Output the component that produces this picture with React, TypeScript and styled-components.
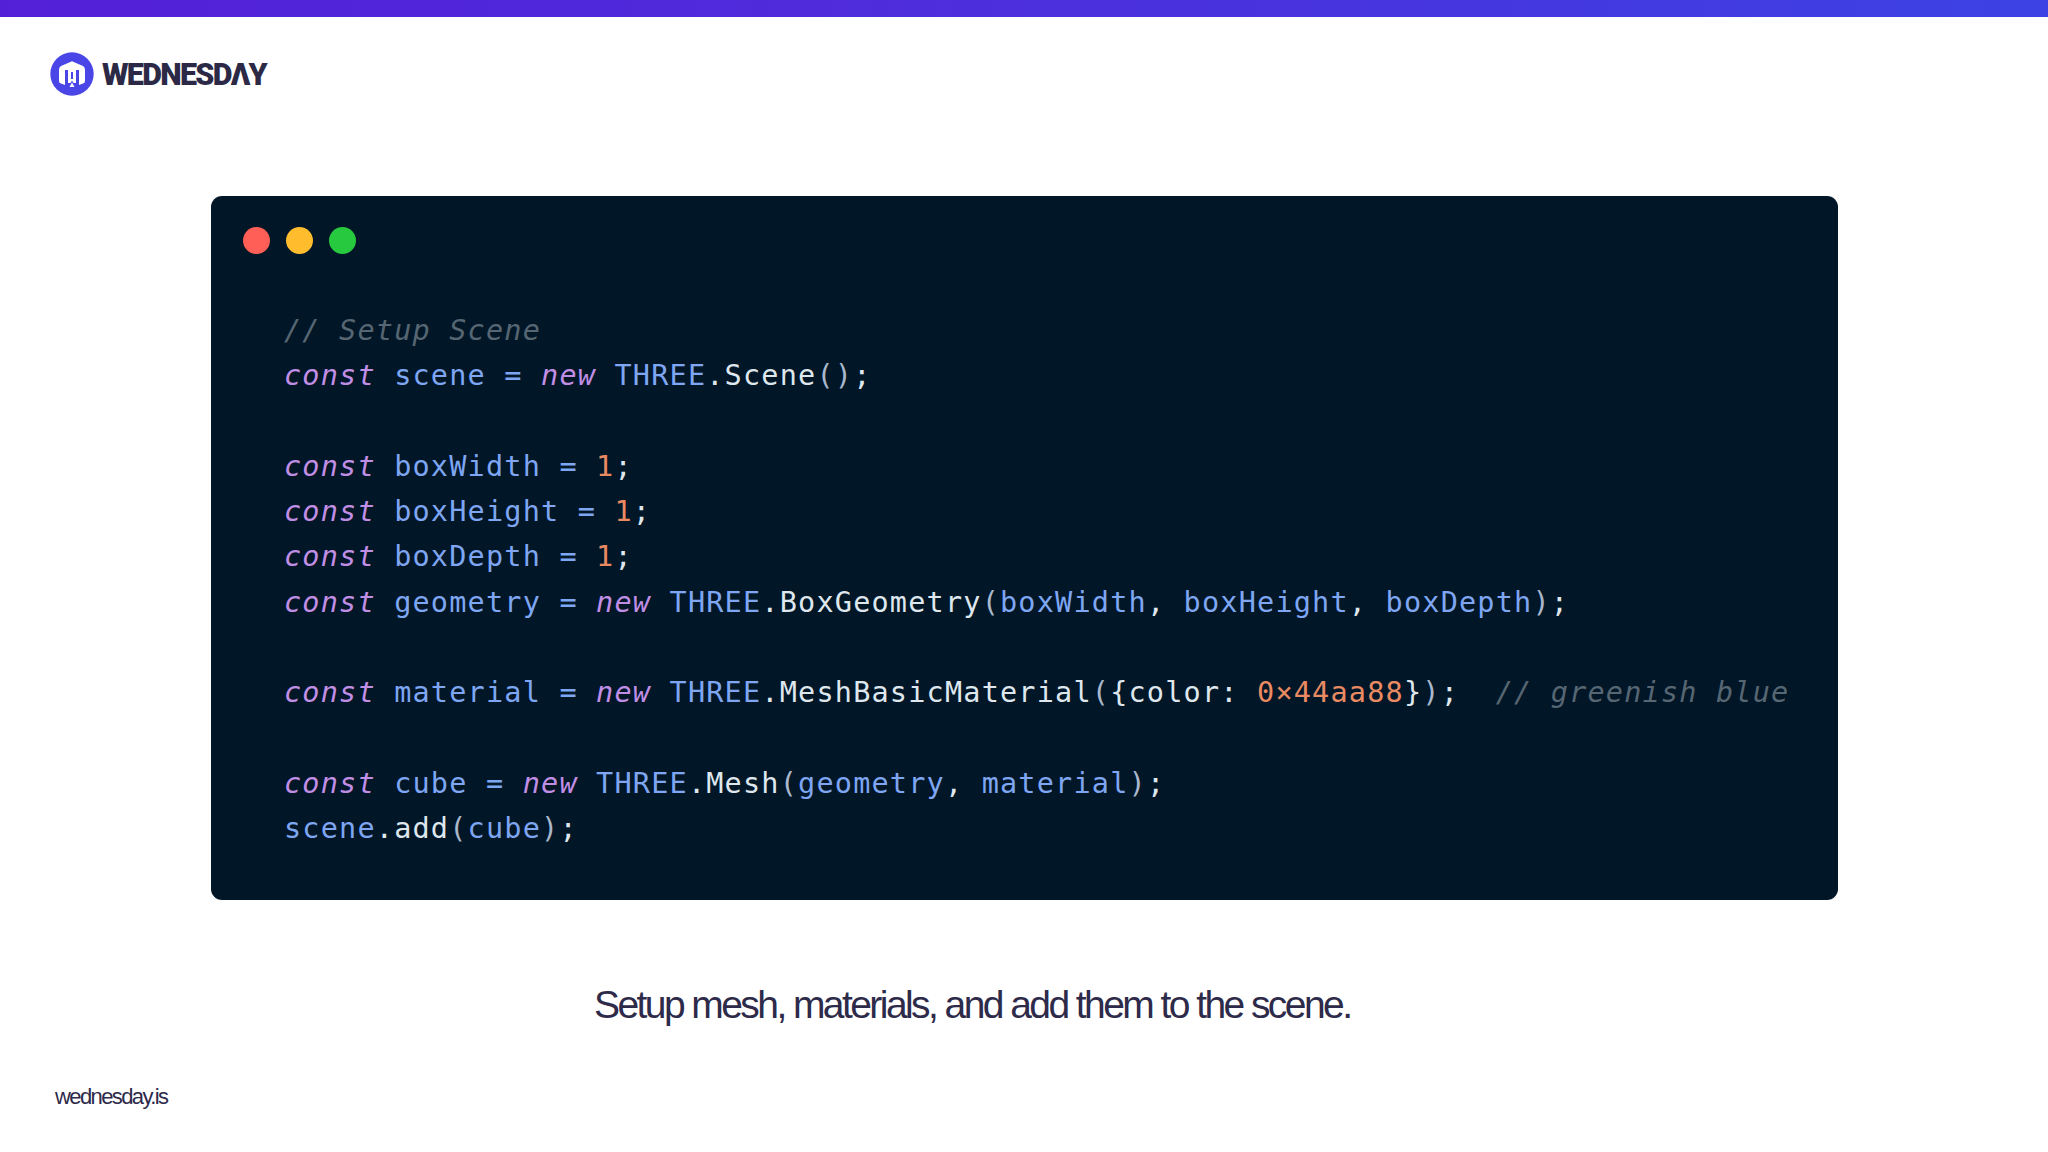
import React from "react";
import styled, { createGlobalStyle } from "styled-components";

const Global = createGlobalStyle`
  html, body { margin: 0; padding: 0; background: #fff; }
  body { width: 2048px; height: 1152px; overflow: hidden; }
`;

const Slide = styled.div`
  width: 2048px;
  height: 1152px;
  display: flex;
  flex-direction: column;
  background: #fff;
  color: #2d2a4a;
  font-family: "Liberation Sans", Arial, sans-serif;
`;

const TopBar = styled.div`
  height: 17px;
  flex: none;
  background: linear-gradient(90deg, #5320d8 0%, #4f2bdc 40%, #4636e0 70%, #3c42e4 100%);
`;

const Header = styled.header`
  height: 179px;
  flex: none;
  box-sizing: border-box;
  padding: 35px 0 0 50px;
  display: flex;
  align-items: flex-start;
  gap: 8px;
`;

const LogoText = styled.span`
  font-family: Roboto, "Liberation Sans", sans-serif;
  font-weight: 900;
  font-size: 30.5px;
  line-height: 45px;
  letter-spacing: -1.7px;
  color: #2b2945;
`;

const CodeCard = styled.section`
  width: 1627px;
  height: 704px;
  margin-left: 210.5px;
  flex: none;
  box-sizing: border-box;
  background: #011627;
  border-radius: 11px;
  padding: 31px 0 0 32px;
`;

const Lights = styled.div`
  display: flex;
  gap: 16px;
`;

const Light = styled.span<{ $color: string }>`
  width: 27px;
  height: 27px;
  border-radius: 50%;
  background: ${(p) => p.$color};
`;

const Code = styled.pre`
  margin: 54px 0 0 41.5px;
  font-family: "DejaVu Sans Mono", "Liberation Mono", monospace;
  font-size: 28.5px;
  letter-spacing: 1.2px;
  line-height: 45.3px;
  color: #dfe7ee;
`;

const Kw = styled.i`
  color: #c18ee6;
`;
const V = styled.span`
  color: #7ea6f2;
`;
const Num = styled.span`
  color: #ea8a62;
`;
const Cm = styled.i`
  color: #566672;
`;
const P = styled.span`
  color: #a9b8cc;
`;

const Caption = styled.p`
  margin: 80px 0 0 594px;
  font-size: 39px;
  line-height: 50px;
  letter-spacing: -2.57px;
  color: #2d2a4a;
  white-space: nowrap;
`;

const Footer = styled.footer`
  margin: 53px 0 0 55px;
  font-size: 22px;
  line-height: 28px;
  letter-spacing: -1.6px;
  color: #2d2a4a;
`;

const Logo = () => (
  <svg width="44" height="44" viewBox="0 0 44 44" aria-hidden="true">
    <circle cx="22" cy="22" r="21.7" fill="#4a45e6" />
    <path
      d="M22 9.3 L33 14 Q35 15 35 17.5 V29 Q35 31 33 31.5 L29 33 V18 H15 V33 L11 31.5 Q9 31 9 29 V17.5 Q9 15 11 14 Z"
      fill="#fff"
    />
    <path
      d="M18 17 H26 V31 H23.5 L22 28.5 L20.5 31 H18 Z"
      fill="#fff"
    />
    <rect x="21" y="20" width="2" height="7" fill="#4a45e6" />
    <path d="M22 30.5 L24.5 35 H19.5 Z" fill="#fff" />
  </svg>
);

export default function App() {
  return (
    <Slide>
      <Global />
      <TopBar />
      <Header>
        <Logo />
        <LogoText aria-label="WEDNESDAY">WEDNESDΛY</LogoText>
      </Header>
      <CodeCard>
        <Lights>
          <Light $color="#ff5f56" />
          <Light $color="#ffbd2e" />
          <Light $color="#27c93f" />
        </Lights>
        <Code>
          <Cm>// Setup Scene</Cm>
          {"\n"}
          <Kw>const</Kw> <V>scene</V> <V>=</V> <Kw>new</Kw> <V>THREE</V>.Scene<P>()</P>;
          {"\n\n"}
          <Kw>const</Kw> <V>boxWidth</V> <V>=</V> <Num>1</Num>;
          {"\n"}
          <Kw>const</Kw> <V>boxHeight</V> <V>=</V> <Num>1</Num>;
          {"\n"}
          <Kw>const</Kw> <V>boxDepth</V> <V>=</V> <Num>1</Num>;
          {"\n"}
          <Kw>const</Kw> <V>geometry</V> <V>=</V> <Kw>new</Kw> <V>THREE</V>.BoxGeometry<P>(</P><V>boxWidth</V>, <V>boxHeight</V>, <V>boxDepth</V><P>)</P>;
          {"\n\n"}
          <Kw>const</Kw> <V>material</V> <V>=</V> <Kw>new</Kw> <V>THREE</V>.MeshBasicMaterial<P>(</P>{"{"}color: <Num>0×44aa88</Num>{"}"}<P>)</P>;{"  "}<Cm>// greenish blue</Cm>
          {"\n\n"}
          <Kw>const</Kw> <V>cube</V> <V>=</V> <Kw>new</Kw> <V>THREE</V>.Mesh<P>(</P><V>geometry</V>, <V>material</V><P>)</P>;
          {"\n"}
          <V>scene</V>.add<P>(</P><V>cube</V><P>)</P>;
        </Code>
      </CodeCard>
      <Caption>Setup mesh, materials, and add them to the scene.</Caption>
      <Footer>wednesday.is</Footer>
    </Slide>
  );
}
